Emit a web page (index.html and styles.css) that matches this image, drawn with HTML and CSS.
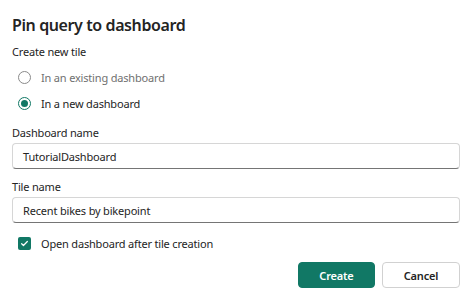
FILE: index.html
```html
<!DOCTYPE html>
<html lang="en">
<head>
  <meta charset="UTF-8">
  <title>Pin query to dashboard</title>
  <link rel="stylesheet" href="styles.css">
</head>
<body>
  <div class="dialog">
    <h1 class="dialog-title">Pin query to dashboard</h1>

    <div class="section-label">Create new tile</div>
    <div class="radio-group">
      <label class="radio-row">
        <span class="radio"></span>
        <span class="radio-text muted">In an existing dashboard</span>
      </label>
      <label class="radio-row">
        <span class="radio checked"></span>
        <span class="radio-text">In a new dashboard</span>
      </label>
    </div>

    <div class="field-label first">Dashboard name</div>
    <div class="text-input">TutorialDashboard</div>

    <div class="field-label">Tile name</div>
    <div class="text-input">Recent bikes by bikepoint</div>

    <label class="check-row">
      <span class="checkbox">
        <svg width="9" height="9" viewBox="0 0 12 12">
          <path d="M2.2 6.3l2.4 2.4 5.2-5.4" fill="none" stroke="#fff" stroke-width="1.6" stroke-linecap="round" stroke-linejoin="round"/>
        </svg>
      </span>
      <span class="check-text">Open dashboard after tile creation</span>
    </label>

    <div class="actions">
      <button class="btn primary">Create</button>
      <button class="btn secondary">Cancel</button>
    </div>
  </div>
</body>
</html>
```

FILE: styles.css
```css
* {
  box-sizing: border-box;
  font-family: 'Noto Sans', 'Open Sans', sans-serif;
}

body {
  margin: 0;
  background-color: #ffffff;
  color: #242424;
}

.dialog {
  width: 474px;
  height: 299px;
  padding: 14px 14px 0 12px;
  display: flex;
  flex-direction: column;
}

.dialog-title {
  margin: 0;
  font-size: 16px;
  line-height: 22px;
  font-weight: 600;
  letter-spacing: -0.4px;
  color: #242424;
}

.section-label,
.field-label,
.radio-text,
.check-text,
.text-input,
.btn {
  font-size: 11px;
  letter-spacing: -0.18px;
}

.section-label,
.field-label {
  line-height: 16px;
  color: #242424;
}

.section-label {
  margin-top: 8px;
}

.radio-group {
  margin-top: 4px;
  display: flex;
  flex-direction: column;
}

.radio-row {
  height: 26px;
  display: flex;
  align-items: center;
  padding-left: 6px;
}

.radio {
  width: 13px;
  height: 13px;
  border: 1px solid #8a8a8a;
  border-radius: 50%;
  display: flex;
  justify-content: center;
  align-items: center;
}

.radio.checked {
  border-color: #117865;
}

.radio.checked::after {
  content: "";
  width: 7px;
  height: 7px;
  border-radius: 50%;
  background-color: #117865;
}

.radio-text {
  margin-left: 10px;
}

.radio-text.muted {
  color: #707070;
}

.field-label {
  margin-top: 10px;
}

.field-label.first {
  margin-top: 9px;
}

.text-input {
  margin-top: 2px;
  width: 448px;
  height: 26px;
  padding: 0 10px;
  display: flex;
  align-items: center;
  border: 1px solid #d6d6d6;
  border-bottom-color: #757575;
  border-radius: 4px;
}

.check-row {
  margin-top: 10px;
  height: 20px;
  display: flex;
  align-items: center;
  padding-left: 6px;
}

.checkbox {
  width: 13px;
  height: 13px;
  border-radius: 2px;
  background-color: #117865;
  display: flex;
  justify-content: center;
  align-items: center;
}

.check-text {
  margin-left: 10px;
}

.actions {
  margin-top: 9px;
  display: flex;
  justify-content: flex-end;
  gap: 7px;
}

.btn {
  height: 26px;
  width: 77px;
  border-radius: 4px;
  font-weight: 600;
  padding: 0;
  cursor: pointer;
}

.btn.primary {
  background-color: #117865;
  border: 1px solid #117865;
  color: #ffffff;
}

.btn.secondary {
  width: 78px;
  background-color: #ffffff;
  border: 1px solid #d1d1d1;
  color: #242424;
}
```
